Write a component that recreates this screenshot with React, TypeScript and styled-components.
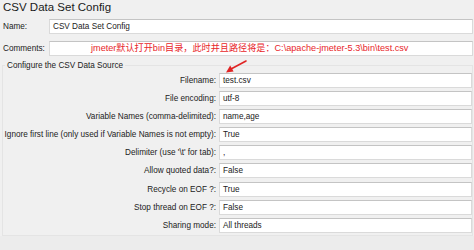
import React from 'react'
import styled, { createGlobalStyle } from 'styled-components'

const GlobalStyle = createGlobalStyle`
  html, body {
    margin: 0;
    padding: 0;
    background: #f0f0f0;
  }
  body {
    font-family: "Liberation Sans", Arial, sans-serif;
    color: #222;
  }
`

interface Field {
  label: string
  value: string
}

const sourceFields: Field[] = [
  { label: 'Filename:', value: 'test.csv' },
  { label: 'File encoding:', value: 'utf-8' },
  { label: 'Variable Names (comma-delimited):', value: 'name,age' },
  { label: 'Ignore first line (only used if Variable Names is not empty):', value: 'True' },
  { label: "Delimiter (use '\\t' for tab):", value: ',' },
  { label: 'Allow quoted data?:', value: 'False' },
  { label: 'Recycle on EOF ?:', value: 'True' },
  { label: 'Stop thread on EOF ?:', value: 'False' },
  { label: 'Sharing mode:', value: 'All threads' },
]

const App = (): JSX.Element => {
  return (
    <Page>
      <GlobalStyle />
      <Title>CSV Data Set Config</Title>
      <TopRow $top={2}>
        <TopLabel>Name:</TopLabel>
        <Box>CSV Data Set Config</Box>
      </TopRow>
      <TopRow $top={7}>
        <TopLabel>Comments:</TopLabel>
        <Box>
          <Note>jmeter默认打开bin目录，此时并且路径将是：C:\apache-jmeter-5.3\bin\test.csv</Note>
        </Box>
      </TopRow>
      <Group>
        <Legend>Configure the CSV Data Source</Legend>
        {/* red annotation arrow pointing at the filename field */}
        <Arrow width="22" height="14" viewBox="0 0 22 14">
          <path d="M21 1 L6 9" stroke="#e02424" strokeWidth="1.6" strokeLinecap="round" />
          <path d="M1 12.5 L5.2 5.6 L8.6 11.4 Z" fill="#e02424" />
        </Arrow>
        <Grid>
          {sourceFields.map((f) => (
            <React.Fragment key={f.label}>
              <FieldLabel>{f.label}</FieldLabel>
              <Box>{f.value}</Box>
            </React.Fragment>
          ))}
        </Grid>
      </Group>
      <Footer />
    </Page>
  )
}

export default App

const Page = styled.div`
  width: 474px;
  height: 250px;
  overflow: hidden;
  display: flex;
  flex-direction: column;
  background: #f0f0f0;
`

const Title = styled.div`
  height: 17px;
  padding: 0 3px;
  font-size: 11.5px;
  line-height: 15px;
  color: #1a1a1a;
`

const TopRow = styled.div<{ $top: number }>`
  display: flex;
  align-items: center;
  height: 15px;
  margin-top: ${(p) => p.$top}px;
  padding-right: 1px;
`

const TopLabel = styled.div`
  width: 46px;
  padding-left: 3px;
  font-size: 8.2px;
  color: #222;
`

const Box = styled.div`
  flex: 1;
  height: 15px;
  box-sizing: border-box;
  background: #fff;
  border: 1px solid #dadada;
  border-top-color: #c4c4c4;
  padding: 0 3px;
  font-size: 8.2px;
  line-height: 13px;
  color: #222;
  white-space: nowrap;
  overflow: hidden;
`

const Note = styled.span`
  display: inline-block;
  margin-left: 38px;
  font-family: "Liberation Sans", "Noto Sans CJK SC", sans-serif;
  font-size: 9.15px;
  color: #e8262a;
`

const Group = styled.fieldset`
  position: relative;
  margin: 5px 1px 0 2px;
  padding: 3px 0 2px 0;
  border: 1px solid #e4e4e4;
  min-width: 0;
`

const Legend = styled.legend`
  margin-left: 2px;
  padding: 0 2px;
  font-size: 8.2px;
  line-height: 9px;
  color: #222;
`

const Arrow = styled.svg`
  position: absolute;
  left: 222px;
  top: -10px;
`

const Grid = styled.div`
  display: grid;
  grid-template-columns: 213px 1fr;
  grid-auto-rows: 15px;
  row-gap: 3.1px;
  column-gap: 3px;
  align-items: center;
`

const FieldLabel = styled.div`
  text-align: right;
  font-size: 8.2px;
  white-space: nowrap;
  color: #222;
`

const Footer = styled.div`
  flex: 1;
  background: #ececec;
`
